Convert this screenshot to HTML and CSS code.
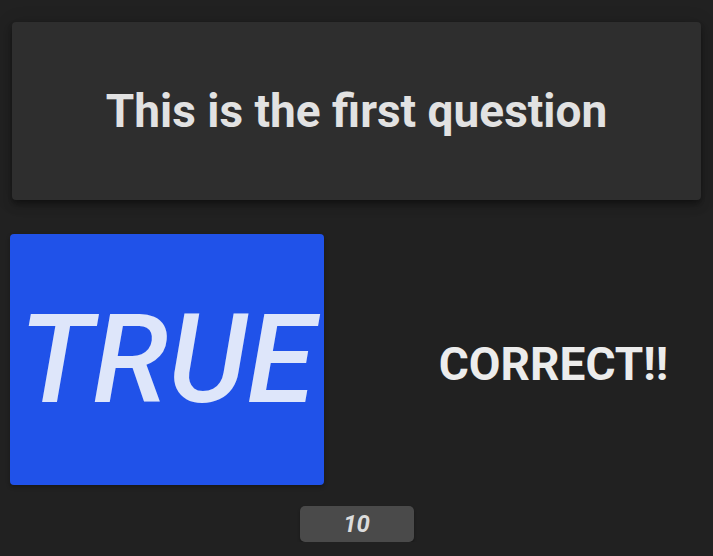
FILE: index.html
```html
<!DOCTYPE html>
<html lang="en">
<head>
<meta charset="utf-8">
<title>Quiz</title>
<link rel="stylesheet" href="styles.css">
</head>
<body>
<main class="quiz">
  <section class="question-card">
    <h1 class="question-text">This is the first question</h1>
  </section>
  <section class="answer-row">
    <button class="answer-btn" type="button">TRUE</button>
    <div class="result">CORRECT!!</div>
  </section>
  <div class="timer-row">
    <span class="timer">10</span>
  </div>
</main>
</body>
</html>
```
FILE: styles.css
```css
html, body {
  margin: 0;
  padding: 0;
  background: #212121;
  font-family: Roboto, "Liberation Sans", sans-serif;
  color: #e6e6e6;
}

.quiz {
  display: flex;
  flex-direction: column;
  padding-top: 22px;
}

.question-card {
  margin: 0 12px;
  height: 178px;
  background: #2e2e2e;
  border-radius: 4px;
  box-shadow: 0 3px 5px -1px rgba(0,0,0,0.3), 0 6px 10px 0 rgba(0,0,0,0.2), 0 1px 18px 0 rgba(0,0,0,0.15);
  display: flex;
  align-items: center;
  justify-content: center;
}

.question-text {
  margin: 0;
  font-size: 46px;
  font-weight: 700;
  color: #e2e2e2;
  line-height: 1;
}

.answer-row {
  display: flex;
  align-items: center;
  margin-top: 34px;
  padding: 0 10px;
}

.answer-btn {
  width: 314px;
  height: 251px;
  flex: none;
  border: none;
  border-radius: 4px;
  background: #2052e9;
  color: #dee6fa;
  font-family: Roboto, "Liberation Sans", sans-serif;
  font-style: italic;
  font-weight: 500;
  font-size: 124px;
  line-height: 1;
  padding: 0;
  overflow: hidden;
  display: flex;
  align-items: center;
  justify-content: center;
  box-shadow: 0 2px 4px rgba(0,0,0,0.3);
}

.result {
  flex: 1;
  padding-left: 80px;
  padding-top: 8px;
  text-align: center;
  font-size: 46px;
  font-weight: 700;
  color: #ececec;
  line-height: 1;
}

.timer-row {
  display: flex;
  justify-content: center;
  margin-top: 21px;
}

.timer {
  width: 114px;
  height: 36px;
  border-radius: 5px;
  background: #4a4a4a;
  color: #dcdcdc;
  font-size: 24px;
  font-weight: 700;
  font-style: italic;
  display: flex;
  align-items: center;
  justify-content: center;
  box-shadow: 0 2px 3px rgba(0,0,0,0.3);
}
```
